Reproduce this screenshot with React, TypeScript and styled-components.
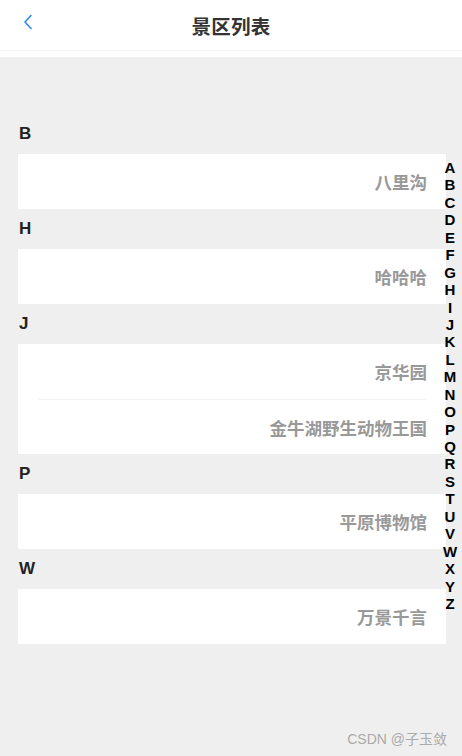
import React from "react";
import styled, { createGlobalStyle } from "styled-components";

const GlobalStyle = createGlobalStyle`
  html, body {
    margin: 0;
    padding: 0;
    background: #efefef;
  }
  body {
    font-family: "Noto Sans CJK SC", "Liberation Sans", sans-serif;
  }
`;

interface Group {
  letter: string;
  items: string[];
}

const groups: Group[] = [
  { letter: "B", items: ["八里沟"] },
  { letter: "H", items: ["哈哈哈"] },
  { letter: "J", items: ["京华园", "金牛湖野生动物王国"] },
  { letter: "P", items: ["平原博物馆"] },
  { letter: "W", items: ["万景千言"] },
];

const letters = "ABCDEFGHIJKLMNOPQRSTUVWXYZ".split("");

function BackIcon() {
  return (
    <svg width="10" height="16" viewBox="0 0 10 16" fill="none">
      <path
        d="M8 1.5L2 8l6 6.5"
        stroke="#2f86f6"
        strokeWidth="1.6"
        strokeLinecap="round"
        strokeLinejoin="round"
      />
    </svg>
  );
}

function App() {
  return (
    <Page>
      <GlobalStyle />
      <NavBar>
        <BackButton>
          <BackIcon />
        </BackButton>
        <Title>景区列表</Title>
      </NavBar>
      <NavGap />
      <List>
        {groups.map((g) => (
          <section key={g.letter}>
            <GroupLabel>{g.letter}</GroupLabel>
            <Card>
              {g.items.map((name, i) => (
                <Item key={name} $divider={i > 0}>
                  {name}
                </Item>
              ))}
            </Card>
          </section>
        ))}
      </List>
      <IndexBar>
        {letters.map((l) => (
          <IndexLetter key={l}>{l}</IndexLetter>
        ))}
      </IndexBar>
      <Watermark>CSDN @子玉敛</Watermark>
    </Page>
  );
}

const Page = styled.div`
  position: relative;
  min-height: 756px;
  background: #efefef;
`;

const NavBar = styled.header`
  height: 50px;
  background: #fff;
  border-bottom: 1px solid #f6f6f6;
  display: flex;
  align-items: center;
  justify-content: center;
  position: relative;
`;

const BackButton = styled.div`
  position: absolute;
  left: 23px;
  top: 14px;
  display: flex;
`;

const Title = styled.h1`
  margin: 0;
  font-size: 19.5px;
  font-weight: 700;
  color: #333;
  letter-spacing: 0.3px;
`;

const NavGap = styled.div`
  height: 6px;
  background: #fff;
`;

const List = styled.div`
  padding: 57px 16px 0 18px;
`;

const GroupLabel = styled.div`
  height: 40px;
  line-height: 40px;
  padding-left: 1px;
  font-family: "Liberation Sans", "Noto Sans CJK SC", sans-serif;
  font-size: 17px;
  font-weight: 700;
  color: #222;
`;

const Card = styled.div`
  background: #fff;
  padding: 0 19px 0 20px;
`;

const Item = styled.div<{ $divider: boolean }>`
  height: ${(p) => (p.$divider ? "54px" : "55px")};
  display: flex;
  align-items: center;
  justify-content: flex-end;
  font-size: 17.5px;
  font-weight: 700;
  color: #999;
  border-top: ${(p) => (p.$divider ? "1px solid #f3f3f3" : "none")};
`;

const IndexBar = styled.div`
  position: absolute;
  right: 5px;
  top: 159px;
  width: 14px;
  display: flex;
  flex-direction: column;
  align-items: center;
`;

const IndexLetter = styled.span`
  font-family: "Liberation Sans", Arial, sans-serif;
  font-size: 15px;
  font-weight: 700;
  line-height: 17.44px;
  color: #000;
`;

const Watermark = styled.div`
  position: absolute;
  right: 15px;
  bottom: 8px;
  font-size: 14px;
  color: #aaa;
  font-family: "Liberation Sans", "Noto Sans CJK SC", sans-serif;
`;

export default App;
